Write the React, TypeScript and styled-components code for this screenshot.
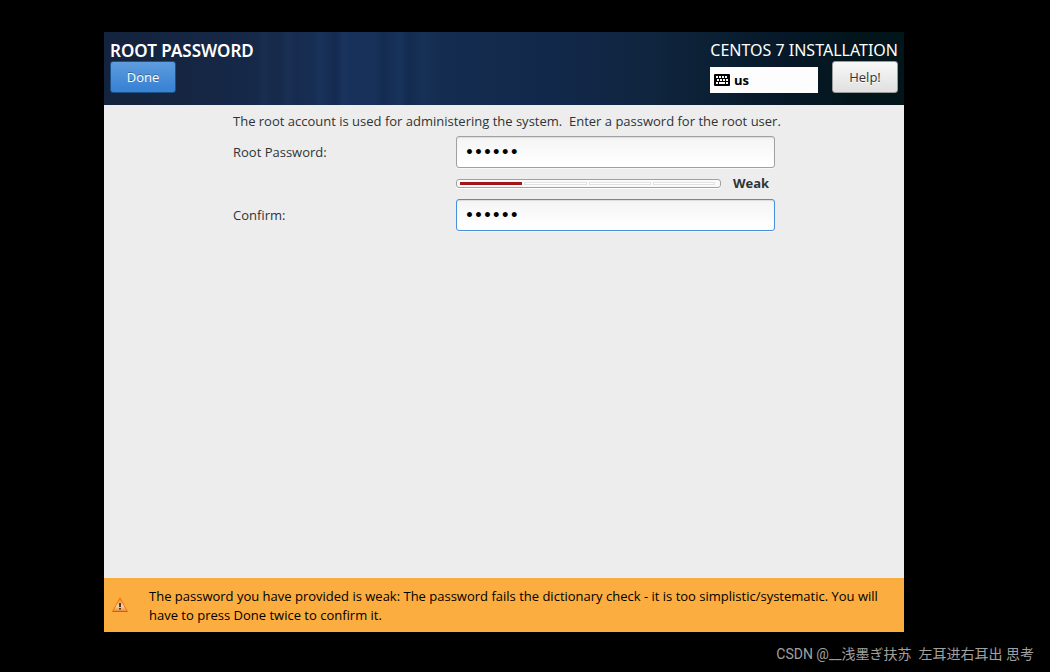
import React, { useState } from "react";
import styled, { createGlobalStyle } from "styled-components";

const GlobalStyle = createGlobalStyle`
  *, *::before, *::after { box-sizing: border-box; }
  body {
    margin: 0;
    background: #000;
    color: #2e3436;
    font: 13px/19px "Open Sans", "Noto Sans", sans-serif;
  }
`;

const Page = styled.div`
  display: flex;
  flex-direction: column;
  min-height: 100vh;
  padding-top: 32px;
`;

const Installer = styled.main`
  flex: 1;
  display: flex;
  flex-direction: column;
  margin: 0 146px 0 104px;
  background: #ededed;
`;

const Header = styled.header`
  display: flex;
  justify-content: space-between;
  padding: 9px 6px 12px;
  color: #fff;
  background:
    linear-gradient(90deg,
      transparent 19%, rgba(70, 120, 190, 0.06) 20%, transparent 21% 22%,
      rgba(70, 120, 190, 0.06) 23%, transparent 24% 26%, rgba(70, 120, 190, 0.07) 27%,
      transparent 28%, rgba(0, 0, 30, 0.1) 29%, rgba(70, 120, 190, 0.06) 30%, transparent 31% 34%,
      rgba(0, 0, 30, 0.1) 35%, transparent 36%, rgba(70, 120, 190, 0.06) 37%,
      rgba(0, 0, 30, 0.08) 38%, transparent 39%, rgba(70, 120, 190, 0.05) 40%, transparent 42%),
    linear-gradient(90deg, #14233d 0%, #162949 20%, #17315b 32%, #142d50 41%, #12284a 56%,
      #10253f 68%, #0b2034 76%, #07192a 84%, #03151b 94%, #02161a 100%);
`;

const HeaderSide = styled.div<{ $end?: boolean }>`
  display: flex;
  flex-direction: column;
  gap: 1px;
  align-items: ${(p) => (p.$end ? "flex-end" : "flex-start")};
`;

const Title = styled.h1<{ $bold?: boolean }>`
  margin: 0;
  font-family: "Noto Sans", sans-serif;
  font-size: ${(p) => (p.$bold ? 17 : 16)}px;
  line-height: 19px;
  font-weight: ${(p) => (p.$bold ? 600 : 400)};
`;

const Actions = styled.div`
  display: flex;
  align-items: flex-end;
  gap: 14px;
`;

const Button = styled.button<{ $primary?: boolean }>`
  width: 66px;
  height: 32px;
  padding: 0;
  border: 1px solid ${(p) => (p.$primary ? "#1c5187" : "#9b9b9b")};
  border-radius: 3px;
  font: inherit;
  color: ${(p) => (p.$primary ? "#fff" : "#2e3436")};
  text-shadow: ${(p) => (p.$primary ? "0 -1px rgba(0, 0, 0, 0.3)" : "0 1px #fff")};
  background: ${(p) =>
    p.$primary ? "linear-gradient(#5f9ddd, #3b84d5 85%)" : "linear-gradient(#f8f8f8, #e0e0e0)"};
`;

const KeyboardLayout = styled.button`
  display: flex;
  align-items: center;
  gap: 4px;
  width: 108px;
  height: 26px;
  padding: 0 4px;
  border: 0;
  background: #fdfdfd;
  color: #000;
  font: inherit;
  font-weight: 700;
  svg { display: block; }
`;

const Form = styled.form`
  flex: 1;
  width: 100%;
  max-width: 542px;
  margin: 0 auto;
  padding-top: 7px;
`;

const Intro = styled.p`
  margin: 0 0 5px;
  white-space: pre;
`;

const Fields = styled.div`
  display: grid;
  grid-template-columns: 223fr 319fr;
  align-items: center;
`;

const Field = styled.input`
  width: 100%;
  height: 32px;
  padding: 0 8px;
  border: 1px solid #a1a1a1;
  border-radius: 3px;
  background: linear-gradient(#f4f4f4, #fff 90%);
  box-shadow: inset 0 1px 1px #dcdcdc, 0 1px #f7f7f7;
  color: #000;
  font: bold 14px "DejaVu Sans", sans-serif;
  outline: none;
  &[data-current="true"] { border-color: #4a90d9; }
`;

const Strength = styled.div`
  grid-column: 2;
  display: flex;
  align-items: center;
  gap: 12px;
  height: 31px;
  color: #2e3436;
  font-weight: 700;
`;

const Meter = styled.div`
  display: grid;
  grid-template-columns: repeat(4, 1fr);
  gap: 2px;
  width: 265px;
  height: 9px;
  padding: 2px 5px 2px 3px;
  border: 1px solid #a1a1a1;
  border-radius: 3px;
  background: #fafafa;
  box-shadow: 0 1px #fff;
`;

const Segment = styled.span<{ $on: boolean }>`
  height: 3px;
  border: 1px solid ${(p) => (p.$on ? "#a01418" : "#e2e2e2")};
  background: ${(p) => (p.$on ? "#dc0000" : "#fff")};
`;

const Warning = styled.div`
  display: flex;
  align-items: center;
  gap: 21px;
  padding: 9px 12px 7px 8px;
  background: #fbad3f;
  color: #000;
  svg { flex: none; }
  p { margin: 0; }
`;

const Watermark = styled.footer`
  height: 40px;
  padding: 12px 16px 0 0;
  color: #a0a0a0;
  font: 14px/20px Roboto, "Noto Sans CJK SC", sans-serif;
  text-align: right;
  white-space: pre;
`;

const KeyboardIcon = () => (
  <svg width="16" height="12" viewBox="0 0 16 12" aria-hidden="true">
    <rect width="16" height="12" rx="1" fill="#000" />
    <path
      stroke="#fff"
      strokeWidth="2"
      fill="none"
      d="M2 3h2M5 3h2M8 3h2M11 3h2M3 6h2M6 6h2M9 6h2M12 6h2"
    />
    <path stroke="#fff" strokeWidth="2" fill="none" d="M2 9h2M5 9h6M12 9h2" />
  </svg>
);

const WarningIcon = () => (
  <svg width="16" height="18" viewBox="0 0 16 18" aria-hidden="true">
    <defs>
      <linearGradient id="warn" x1="0" y1="0" x2="0" y2="1">
        <stop offset="0" stopColor="#f57900" />
        <stop offset="0.6" stopColor="#fbd3a8" />
        <stop offset="1" stopColor="#f08a2c" />
      </linearGradient>
    </defs>
    <path d="M8 .8 15.3 14.4H.7Z" fill="url(#warn)" stroke="#ee7416" strokeLinejoin="round" />
    <path d="M.7 14.5H15.3" stroke="#d9560a" />
    <path d="M7 6h2v4H7ZM7 11h2v1.6H7Z" fill="#3e3a36" />
  </svg>
);

export default function App() {
  const [password, setPassword] = useState("centos");
  const [confirm, setConfirm] = useState("centos");
  return (
    <>
      <GlobalStyle />
      <Page>
        <Installer>
          <Header>
            <HeaderSide>
              <Title $bold>ROOT PASSWORD</Title>
              <Button type="button" $primary>Done</Button>
            </HeaderSide>
            <HeaderSide $end>
              <Title as="div">CENTOS 7 INSTALLATION</Title>
              <Actions>
                <KeyboardLayout type="button">
                  <KeyboardIcon />
                  us
                </KeyboardLayout>
                <Button type="button">Help!</Button>
              </Actions>
            </HeaderSide>
          </Header>
          <Form>
            <Intro>{"The root account is used for administering the system.  Enter a password for the root user."}</Intro>
            <Fields>
              <label htmlFor="password">Root Password:</label>
              <Field id="password" type="password" value={password} onChange={(e) => setPassword(e.target.value)} />
              <Strength>
                <Meter role="meter" aria-label="Password strength" aria-valuemin={0} aria-valuemax={4} aria-valuenow={1}>
                  {[0, 1, 2, 3].map((i) => <Segment key={i} $on={i < 1} />)}
                </Meter>
                Weak
              </Strength>
              <label htmlFor="confirm">Confirm:</label>
              <Field id="confirm" type="password" data-current="true" value={confirm} onChange={(e) => setConfirm(e.target.value)} />
            </Fields>
          </Form>
          <Warning role="alert">
            <WarningIcon />
            <p>
              The password you have provided is weak: The password fails the dictionary check - it is too
              simplistic/systematic. You will have to press Done twice to confirm it.
            </p>
          </Warning>
        </Installer>
        <Watermark>{"CSDN @__浅墨ぎ扶苏  左耳进右耳出 思考"}</Watermark>
      </Page>
    </>
  );
}
